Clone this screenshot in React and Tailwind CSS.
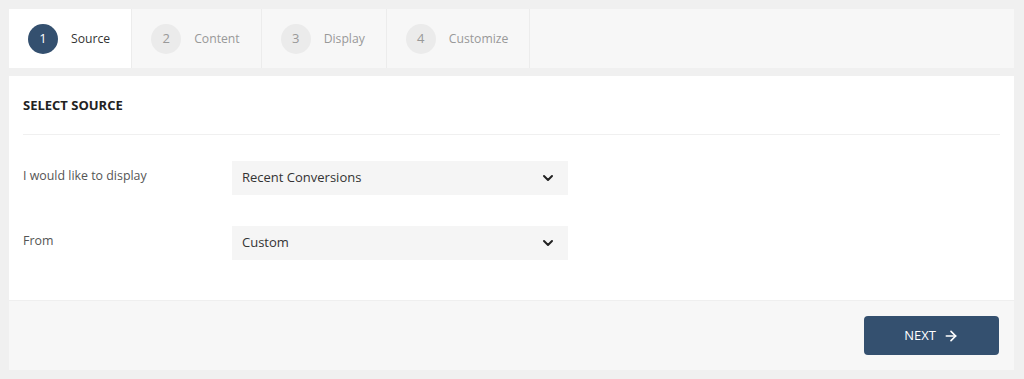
import { ChevronDown, ArrowRight } from "lucide-react";

const steps = ["Source", "Content", "Display", "Customize"];

function Select({ value }) {
  return (
    <div className="w-[336px] h-[34px] bg-[#f5f5f5] flex items-center justify-between pl-[10px] pr-[12px] text-[13px] text-[#333]">
      <span>{value}</span>
      <ChevronDown size={16} strokeWidth={3} className="text-[#222]" />
    </div>
  );
}

export default function App() {
  return (
    <div
      className="w-[1024px] h-[379px] bg-[#f0f0f0] p-[9px] pr-[10px]"
      style={{ fontFamily: '"Open Sans", "Noto Sans", sans-serif' }}
    >
      <div className="flex h-[59px] bg-[#f7f7f7]">
        {steps.map((s, i) => (
          <div
            key={s}
            className={`flex items-center gap-[13px] pl-[19px] pr-[21px] border-r border-[#ececec] ${
              i === 0 ? "bg-white" : ""
            }`}
          >
            <div
              className={`w-[30px] h-[30px] rounded-full flex items-center justify-center text-[13px] pt-[1px] ${
                i === 0 ? "bg-[#34506f] text-white" : "bg-[#ebebeb] text-[#999]"
              }`}
            >
              {i + 1}
            </div>
            <span className={`text-[12.2px] pt-[2px] ${i === 0 ? "text-[#333]" : "text-[#999]"}`}>{s}</span>
          </div>
        ))}
      </div>

      <div className="mt-[8px] bg-white">
        <div className="px-[14px]">
          <div className="h-[59px] flex items-center border-b border-[#f0f0f0] pt-[2px]">
            <h2 className="text-[13px] font-bold text-[#222]">SELECT SOURCE</h2>
          </div>
          <div className="pt-[26px] pb-[40px] flex flex-col gap-[31px]">
            <div className="flex items-start">
              <div className="w-[209px] text-[12.4px] text-[#555] pt-[6px]">I would like to display</div>
              <Select value="Recent Conversions" />
            </div>
            <div className="flex items-start">
              <div className="w-[209px] text-[12.4px] text-[#555] pt-[6px]">From</div>
              <Select value="Custom" />
            </div>
          </div>
        </div>
        <div className="h-[70px] bg-[#f7f7f7] border-t border-[#efefef] flex items-center justify-end pr-[15px]">
          <button className="w-[135px] h-[39px] rounded-[4px] bg-[#34506f] text-white text-[13px] flex items-center justify-center gap-[7px]">
            NEXT
            <ArrowRight size={16} strokeWidth={2.5} />
          </button>
        </div>
      </div>
    </div>
  );
}
